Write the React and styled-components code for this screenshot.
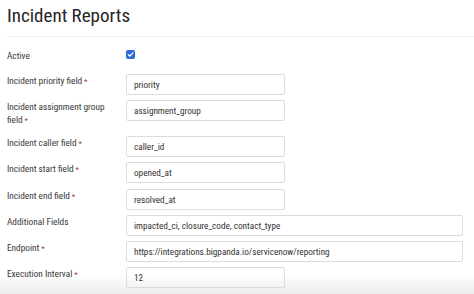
import React from 'react'
import styled, { createGlobalStyle } from 'styled-components'

const fields = [
  { label: 'Incident priority field', required: true, value: 'priority' },
  { label: 'Incident assignment group field', required: true, value: 'assignment_group' },
  { label: 'Incident caller field', required: true, value: 'caller_id' },
  { label: 'Incident start field', required: true, value: 'opened_at' },
  { label: 'Incident end field', required: true, value: 'resolved_at' },
  { label: 'Additional Fields', required: false, value: 'impacted_ci, closure_code, contact_type', wide: true },
  { label: 'Endpoint', required: true, value: 'https://integrations.bigpanda.io/servicenow/reporting', wide: true },
  { label: 'Execution Interval', required: true, value: '12' },
]

const App = () => {
  return (
    <>
      <GlobalStyle />
      <Page>
        <Title>Incident Reports</Title>
        <Divider />
        <Form>
          <Row short={1}>
            <Label>Active</Label>
            <Check>
              <svg width="7" height="7" viewBox="0 0 10 10">
                <path d="M1.8 5.2 L4 7.4 L8.3 2.6" fill="none" stroke="#fff" strokeWidth="1.8" strokeLinecap="round" strokeLinejoin="round" />
              </svg>
            </Check>
          </Row>
          {fields.map((f) => (
            <Row key={f.label}>
              <Label>
                {f.label}
                {f.required && <Star> *</Star>}
              </Label>
              <Input wide={f.wide ? 1 : 0}>{f.value}</Input>
            </Row>
          ))}
        </Form>
      </Page>
    </>
  )
}

export default App

const GlobalStyle = createGlobalStyle`
  html, body {
    margin: 0;
    padding: 0;
  }
  body {
    width: 474px;
    height: 294px;
    overflow: hidden;
    font-family: "Roboto Condensed", Roboto, "Liberation Sans", sans-serif;
    color: #333;
    background: linear-gradient(to bottom, #fff 0px, #fff 274px, #ebebeb 294px);
  }
`;

const Page = styled.div`
  display: flex;
  flex-direction: column;
  padding: 0 0 0 7px;
  box-sizing: border-box;
`;

const Title = styled.h1`
  margin: 0;
  padding-top: 4px;
  font-size: 19px;
  line-height: 24px;
  font-weight: 400;
  color: #262626;
`;

const Divider = styled.div`
  height: 1px;
  background: #ededed;
  margin-top: 8px;
`;

const Form = styled.div`
  display: flex;
  flex-direction: column;
  gap: 5.25px;
  padding-top: 12px;
`;

const Row = styled.div`
  display: flex;
  flex-direction: row;
  align-items: flex-start;
  min-height: ${(p) => (p.short ? '19.75px' : '21px')};
`;

const Label = styled.div`
  width: 108px;
  margin-right: 11px;
  padding-bottom: 3.5px;
  font-size: 9.3px;
  line-height: 13px;
  color: #383838;
`;

const Star = styled.span`
  color: #a8352a;
  font-size: 8px;
`;

const Check = styled.span`
  display: flex;
  align-items: center;
  justify-content: center;
  width: 9px;
  height: 9px;
  margin-top: 1px;
  border-radius: 2px;
  background: #2e6ddb;
`;

const Input = styled.div`
  display: flex;
  align-items: center;
  width: ${(p) => (p.wide ? '337px' : '159px')};
  height: 21px;
  padding: 0 7px;
  box-sizing: border-box;
  border: 1px solid #dcdcdc;
  border-radius: 2px;
  font-size: 9.2px;
  color: #333;
  white-space: nowrap;
`;
